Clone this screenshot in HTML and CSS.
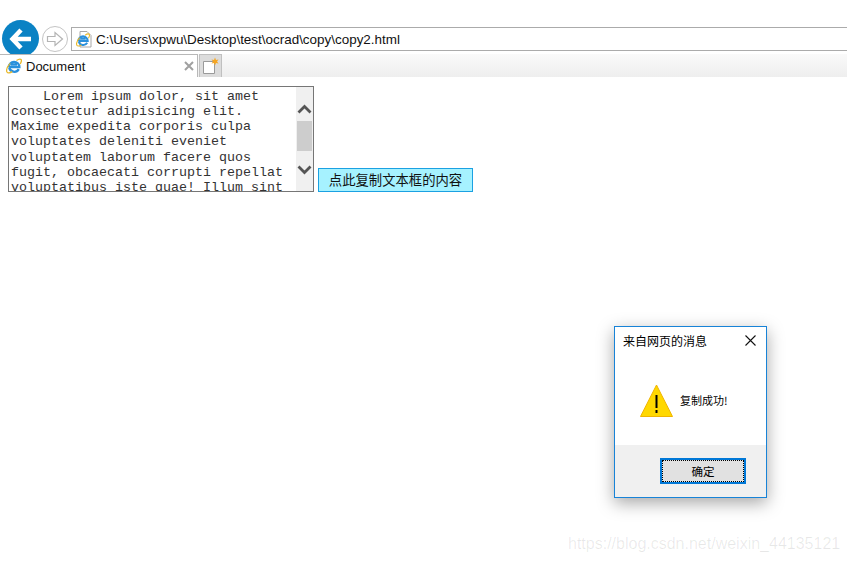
FILE: index.html
```html
<!DOCTYPE html>
<html lang="zh">
<head>
<meta charset="utf-8">
<title>Document</title>
<link rel="stylesheet" href="styles.css">
</head>
<body>
<svg class="defs" width="0" height="0" aria-hidden="true">
  <symbol id="ie" viewBox="0 0 16 16">
    <path d="M2.800 9.200 A5.300 5.300 0 1 1 13.400 9 H3.200 M5 6.400 H11" fill="none" stroke="#2a90dc" stroke-width="2.300"/>
    <path d="M3.200 9.500 A5.200 5.200 0 0 0 12.800 11.200" fill="none" stroke="#2a90dc" stroke-width="2.300"/>
    <path d="M10.500 2.600 C13 0.600 15.600 0.400 15.400 2.800 C15.300 4 14.800 5 14.200 6" fill="none" stroke="#e8b82a" stroke-width="1.300"/>
    <path d="M4.200 5.400 C1.400 8.600 0 12 1 14 C1.800 15.400 4 15 6.200 13.600" fill="none" stroke="#e8b82a" stroke-width="1.300"/>
  </symbol>
</svg>

<header class="toolbar">
  <button class="back" type="button" aria-label="Back">
    <svg width="36" height="36" viewBox="0 0 36 36"><path d="M28 18 H10 M18 9 L9.500 18 L18 27" fill="none" stroke="#fff" stroke-width="4.500"/></svg>
  </button>
  <button class="forward" type="button" aria-label="Forward">
    <svg width="24" height="24" viewBox="0 0 24 24"><path d="M4.500 9.500 H12 V5.500 L19.500 12 L12 18.500 V14.500 H4.500 Z" fill="#fff" stroke="#b4b4b4" stroke-width="1.200"/></svg>
  </button>
  <div class="address">
    <span class="page-icon">
      <svg width="16" height="17" viewBox="0 0 16 17"><path d="M4 .5 H11 L15 4.500 V16 H4 Z" fill="#fff" stroke="#a8a8a8"/></svg>
      <svg class="page-ie" width="14" height="14"><use href="#ie"/></svg>
    </span>
    <span class="url">C:\Users\xpwu\Desktop\test\ocrad\copy\copy2.html</span>
  </div>
</header>

<nav class="tabbar">
  <div class="tab">
    <svg width="16" height="16"><use href="#ie"/></svg>
    <span class="tab-title">Document</span>
    <svg class="tab-close" width="10" height="10" viewBox="0 0 10 10"><path d="M1 1 L9 9 M9 1 L1 9" stroke="#a0a0a0" stroke-width="2"/></svg>
  </div>
  <div class="new-tab">
    <svg width="16" height="18" viewBox="0 0 16 18"><path d="M.5 4.500 H11.500 V16.500 H.5 Z" fill="#fff" stroke="#9a9a9a"/><path d="M12 .5 L13 3 L15.500 2.500 L14 4.500 L15.500 6.500 L13 6 L12 8.500 L11 6 L8.500 6.500 L10 4.500 L8.500 2.500 L11 3 Z" fill="#f5a623"/></svg>
  </div>
</nav>

<main class="content">
  <div class="textbox">
    <div class="textbox-text">    Lorem ipsum dolor, sit amet
consectetur adipisicing elit.
Maxime expedita corporis culpa
voluptates deleniti eveniet
voluptatem laborum facere quos
fugit, obcaecati corrupti repellat
voluptatibus iste quae! Illum sint</div>
    <div class="scrollbar">
      <svg width="17" height="17" viewBox="0 0 17 17"><path d="M2.500 11.500 L8.500 5.500 L14.500 11.500" fill="none" stroke="#555" stroke-width="2.800"/></svg>
      <div class="track"><div class="thumb"></div></div>
      <svg width="17" height="17" viewBox="0 0 17 17"><path d="M2.500 5.500 L8.500 11.500 L14.500 5.500" fill="none" stroke="#555" stroke-width="2.800"/></svg>
    </div>
  </div>
  <button class="copy-btn" type="button">点此复制文本框的内容</button>
</main>

<section class="dialog" role="dialog">
  <div class="dialog-title">
    <span>来自网页的消息</span>
    <svg width="11" height="11" viewBox="0 0 11 11"><path d="M.5 .5 L10.500 10.500 M10.500 .5 L.5 10.500" stroke="#111" stroke-width="1.100"/></svg>
  </div>
  <div class="dialog-body">
    <svg width="33" height="33" viewBox="0 0 33 33"><path d="M16.500 1 L32.500 32.500 H.5 Z" fill="#ffd800" stroke="#f0b400"/><path d="M16.500 11 V24" stroke="#000" stroke-width="2"/><path d="M16.500 26 V29" stroke="#000" stroke-width="2"/></svg>
    <span class="dialog-msg">复制成功!</span>
  </div>
  <div class="dialog-foot">
    <button class="ok" type="button"><span class="ok-inner">确定</span></button>
  </div>
</section>

<div class="watermark">https://blog.csdn.net/weixin_44135121</div>
</body>
</html>
```
FILE: styles.css
```css
* { box-sizing: border-box; }
html, body { margin: 0; height: 100%; }
body {
  position: relative;
  overflow: hidden;
  background: #fff;
  color: #000;
  font-family: "Liberation Sans", "Noto Sans CJK SC", sans-serif;
}
button { font: inherit; padding: 0; margin: 0; }
svg { display: block; }
.defs { position: absolute; }

.toolbar {
  display: flex;
  align-items: flex-start;
  height: 54px;
  padding: 20px 0 0 2px;
}
.back {
  width: 37px;
  height: 37px;
  border: 0;
  border-radius: 50%;
  background: #0a82c4;
  display: flex;
  align-items: center;
  justify-content: center;
  flex: none;
}
.forward {
  width: 26px;
  height: 26px;
  margin: 6px 0 0 3px;
  border: 1px solid #c4c4c4;
  border-radius: 50%;
  background: #fff;
  display: flex;
  align-items: center;
  justify-content: center;
  flex: none;
}
.address {
  flex: 1;
  height: 24px;
  margin: 7px 0 0 3px;
  padding-left: 4px;
  border: 1px solid #ababab;
  border-right: 0;
  display: flex;
  align-items: center;
  gap: 4px;
  font-size: 13.45px;
}
.page-icon { position: relative; width: 16px; height: 17px; flex: none; }
.page-ie { position: absolute; left: 0; top: 2px; }
.url { color: #111; }

.tabbar {
  display: flex;
  height: 23px;
  background: linear-gradient(#fafafa, #eeeeee);
}
.tab {
  width: 198px;
  display: flex;
  align-items: center;
  padding: 0 3px 0 6px;
  gap: 4px;
  background: #fff;
  border-top: 1px solid #b8b8b8;
  border-right: 1px solid #b8b8b8;
  font-size: 13px;
}
.tab-title { flex: 1; color: #111; }
.new-tab {
  width: 23px;
  margin-left: 1px;
  border: 1px solid #c0c0c0;
  border-bottom: 0;
  background: #dcdcdc;
  display: flex;
  align-items: center;
  justify-content: center;
}

.content {
  display: flex;
  align-items: flex-end;
  gap: 4px;
  padding: 9px 0 0 8px;
}
.textbox {
  display: flex;
  width: 306px;
  height: 106px;
  border: 1px solid #767676;
  overflow: hidden;
}
.textbox-text {
  flex: 1;
  padding: 2px 0 0 2px;
  color: #333;
  font-family: "Liberation Mono", monospace;
  font-size: 13.33px;
  line-height: 15.14px;
  white-space: pre;
  overflow: hidden;
}
.scrollbar {
  width: 17px;
  flex: none;
  padding: 14px 0 13px;
  background: #f0f0f0;
  display: flex;
  flex-direction: column;
}
.track { flex: 1; padding: 3px 1px 0; }
.thumb { height: 30px; background: #cdcdcd; }

.copy-btn {
  width: 155px;
  height: 24px;
  padding-bottom: 2px;
  border: 1px solid #1ba1e2;
  background: #a6f2ff;
  font-size: 13.33px;
  font-family: "Noto Sans CJK SC", sans-serif;
  color: #111;
}

.dialog {
  position: absolute;
  left: 614px;
  top: 326px;
  width: 153px;
  height: 172px;
  display: flex;
  flex-direction: column;
  background: #fff;
  border: 1px solid #1883d7;
  box-shadow: 0 5px 16px rgba(0,0,0,.35);
  font-family: "Noto Sans CJK SC", sans-serif;
}
.dialog-title {
  display: flex;
  justify-content: space-between;
  align-items: center;
  height: 27px;
  padding: 0 10px 0 8px;
  font-size: 12px;
}
.dialog-body {
  flex: 1;
  display: flex;
  align-items: center;
  gap: 7px;
  padding: 2px 0 0 25px;
  font-size: 11px;
}
.dialog-msg { margin-top: -2px; }
.dialog-foot {
  height: 52px;
  background: #f0f0f0;
  padding: 13px 0 0 45px;
}
.ok {
  display: block;
  width: 86px;
  height: 26px;
  border: 2px solid #0078d7;
  background: #e1e1e1;
}
.ok-inner {
  display: flex;
  align-items: center;
  justify-content: center;
  height: 100%;
  border: 1px dotted #000;
  font-size: 11.5px;
}

.watermark {
  position: absolute;
  left: 568px;
  top: 535px;
  font-size: 16px;
  color: rgba(0,0,0,.09);
  white-space: nowrap;
}
```
